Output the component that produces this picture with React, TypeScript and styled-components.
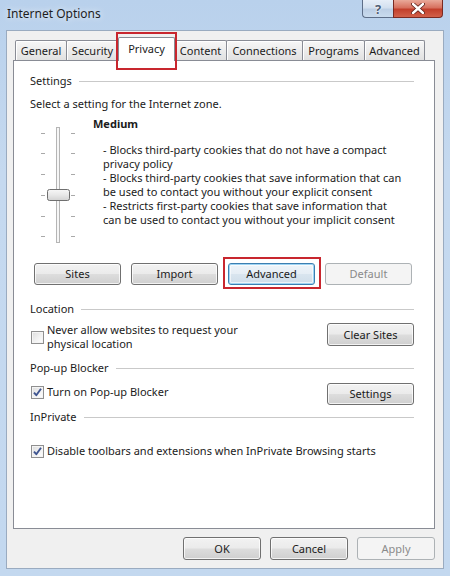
import React from 'react';
import styled, { createGlobalStyle, css } from 'styled-components';

const GlobalStyle = createGlobalStyle`
  html, body {
    margin: 0;
    padding: 0;
  }
  body {
    width: 450px;
    height: 576px;
    overflow: hidden;
    font-family: "Noto Sans", "Liberation Sans", Arial, sans-serif;
    font-size: 11px;
    color: #1b1b1b;
  }
`;

const Window = styled.div`
  width: 450px;
  height: 576px;
  box-sizing: border-box;
  display: flex;
  flex-direction: column;
  padding: 0 6px 7px 6px;
  background: linear-gradient(180deg, #b9d1ec 0%, #c5d9ef 30%, #c3d8ef 100%);
`;

const TitleBar = styled.div`
  height: 30px;
  display: flex;
  justify-content: space-between;
  align-items: flex-start;
`;

const Title = styled.div`
  margin: 6px 0 0 1px;
  font-size: 12px;
  line-height: 16px;
  color: #1e1e1e;
  text-shadow: 0 0 6px rgba(255, 255, 255, 0.9);
`;

const CaptionGroup = styled.div`
  display: flex;
  margin-right: 1px;
`;

const CaptionButton = styled.div<{ $kind: 'help' | 'close' }>`
  height: 18px;
  box-sizing: border-box;
  display: flex;
  align-items: center;
  justify-content: center;
  border: 1px solid #5d6e88;
  border-top: none;
  ${(p) =>
    p.$kind === 'help'
      ? css`
          width: 31px;
          border-radius: 0 0 0 4px;
          border-right: none;
          background: linear-gradient(180deg, #e6eef8 0%, #d3e0ef 45%, #bccfe5 55%, #c9dbee 100%);
          color: #4d5d74;
          font-size: 13px;
          font-weight: bold;
          text-shadow: 0 0 2px #fff, 0 0 1px #fff;
        `
      : css`
          width: 50px;
          border-radius: 0 0 4px 0;
          border-color: #7a2a22;
          background: linear-gradient(180deg, #e9a999 0%, #d7715f 45%, #c23f2b 55%, #d2614a 100%);
        `}
`;

const Client = styled.div`
  flex: 1;
  display: flex;
  flex-direction: column;
  border: 1px solid #9aabc0;
  background: #f0f0f0;
  padding: 6px 8px 8px 6px;
`;

const TabStrip = styled.div`
  position: relative;
  z-index: 2;
  height: 23px;
  display: flex;
  align-items: flex-end;
  padding-left: 3px;
`;

const Tab = styled.div<{ $w: number; $active?: boolean; $marked?: boolean }>`
  position: relative;
  width: ${(p) => p.$w}px;
  box-sizing: border-box;
  margin-left: -1px;
  text-align: center;
  border: 1px solid #898c95;
  border-bottom: none;
  border-radius: 2px 2px 0 0;
  ${(p) =>
    p.$active
      ? css`
          z-index: 1;
          height: 24px;
          line-height: 22px;
          margin-bottom: -1px;
          background: #fff;
        `
      : css`
          height: 20px;
          line-height: 19px;
          background: linear-gradient(180deg, #f7f7f7 0%, #ececec 50%, #e1e1e1 100%);
          box-shadow: inset 1px 1px 0 #fff;
        `}
  ${(p) =>
    p.$marked &&
    css`
      &::after {
        content: '';
        position: absolute;
        left: -3px;
        right: -3px;
        top: -6px;
        bottom: -9px;
        border: 2px solid #c8262e;
      }
    `}
`;

const Panel = styled.div`
  flex: 1;
  border: 1px solid #898c95;
  background: #fff;
  padding: 13px 20px 0 16px;
`;

const GroupHeader = styled.div<{ $gap: number }>`
  margin-top: ${(p) => p.$gap}px;
  display: flex;
  align-items: center;
  line-height: 14px;
  &::after {
    content: '';
    flex: 1;
    height: 1px;
    margin-left: 7px;
    background: #c9c9c9;
  }
`;

const Text = styled.div<{ $gap?: number }>`
  margin-top: ${(p) => p.$gap ?? 0}px;
  line-height: 14px;
`;

const ZoneRow = styled.div`
  margin-top: 6px;
  display: flex;
`;

const SliderBox = styled.svg`
  width: 63px;
  height: 128px;
  flex: none;
`;

const LevelBlock = styled.div`
  line-height: 14px;
`;

const LevelName = styled.div`
  font-weight: bold;
`;

const LevelDesc = styled.div`
  margin-top: 12px;
  padding-left: 10px;
`;

const ButtonRow = styled.div`
  margin-top: 18px;
  padding-left: 4px;
  display: flex;
  gap: 10px;
`;

const Button = styled.div<{ $w: number; $h?: number; $disabled?: boolean; $focused?: boolean; $marked?: boolean }>`
  position: relative;
  width: ${(p) => p.$w}px;
  height: ${(p) => p.$h ?? 22}px;
  line-height: ${(p) => (p.$h ?? 22) - 2}px;
  box-sizing: border-box;
  flex: none;
  text-align: center;
  border-radius: 3px;
  border: 1px solid #707070;
  background: linear-gradient(180deg, #f2f2f2 0%, #ebebeb 48%, #dddddd 52%, #cfcfcf 100%);
  box-shadow: inset 0 0 0 1px rgba(255, 255, 255, 0.75);
  color: #1b1b1b;
  ${(p) =>
    p.$focused &&
    css`
      border-color: #3c7fb1;
      background: linear-gradient(180deg, #eef4f9 0%, #e6eef5 48%, #d9e5ef 52%, #cfdde9 100%);
      box-shadow: inset 0 0 0 1px #9fd4f3, inset 0 0 0 2px rgba(255, 255, 255, 0.6);
    `}
  ${(p) =>
    p.$disabled &&
    css`
      border-color: #adb2b5;
      background: #f4f4f4;
      box-shadow: none;
      color: #8a8a8a;
    `}
  ${(p) =>
    p.$marked &&
    css`
      &::after {
        content: '';
        position: absolute;
        left: -6px;
        right: -7px;
        top: -7px;
        bottom: -5px;
        border: 2px solid #c8262e;
      }
    `}
`;

const OptionRow = styled.div<{ $gap: number }>`
  margin-top: ${(p) => p.$gap}px;
  display: flex;
  justify-content: space-between;
  align-items: flex-start;
`;

const CheckLabel = styled.label<{ $pad?: number }>`
  display: flex;
  align-items: center;
  gap: 3px;
  padding-top: ${(p) => p.$pad ?? 0}px;
  line-height: 14px;
`;

const Box = styled.span`
  width: 13px;
  height: 13px;
  margin-left: 1px;
  flex: none;
  box-sizing: border-box;
  border: 1px solid #8f8f8f;
  background: linear-gradient(135deg, #dcdcdc 0%, #f3f3f3 60%, #fff 100%);
  box-shadow: inset 0 0 0 1px #f4f4f4;
  display: flex;
  align-items: center;
  justify-content: center;
`;

const Footer = styled.div`
  margin-top: 8px;
  display: flex;
  justify-content: flex-end;
  gap: 9px;
`;

const Check = ({ checked }: { checked?: boolean }) => (
  <Box>
    {checked && (
      <svg width="11" height="11" viewBox="0 0 11 11">
        <path d="M2 5.6 L4.3 8.2 L9 1.8" fill="none" stroke="#3f5590" strokeWidth="1.9" strokeLinejoin="round" />
      </svg>
    )}
  </Box>
);

const ticks = [16, 36, 57, 78, 99, 119];

const PrivacySlider = () => (
  <SliderBox viewBox="0 0 63 128">
    {ticks.map((y) => (
      <g key={y} fill="#a9a9a9">
        <rect x="11" y={y} width="4" height="1" />
        <rect x="41" y={y} width="4" height="1" />
      </g>
    ))}
    <rect x="26.5" y="10.5" width="3" height="115" fill="#f6f6f6" stroke="#b5b5b5" />
    <rect x="17.5" y="72.5" width="22" height="11" rx="2" fill="url(#thumb)" stroke="#6f6f6f" />
    <defs>
      <linearGradient id="thumb" x1="0" y1="0" x2="0" y2="1">
        <stop offset="0" stopColor="#f7f7f7" />
        <stop offset="0.5" stopColor="#e8e8e8" />
        <stop offset="1" stopColor="#d2d2d2" />
      </linearGradient>
    </defs>
  </SliderBox>
);

const tabs = [
  { label: 'General', w: 52 },
  { label: 'Security', w: 53 },
  { label: 'Privacy', w: 57, active: true },
  { label: 'Content', w: 53 },
  { label: 'Connections', w: 77 },
  { label: 'Programs', w: 63 },
  { label: 'Advanced', w: 61 },
];

export default function App() {
  return (
    <>
      <GlobalStyle />
      <Window>
        <TitleBar>
          <Title>Internet Options</Title>
          <CaptionGroup>
            <CaptionButton $kind="help">?</CaptionButton>
            <CaptionButton $kind="close">
              <svg width="14" height="11" viewBox="0 0 14 11">
                <path d="M2 1 L12 10 M12 1 L2 10" stroke="#5a1d16" strokeWidth="4" strokeLinecap="round" />
                <path d="M2 1 L12 10 M12 1 L2 10" stroke="#fff" strokeWidth="2.4" strokeLinecap="round" />
              </svg>
            </CaptionButton>
          </CaptionGroup>
        </TitleBar>

        <Client>
          <TabStrip>
            {tabs.map((t) => (
              <Tab key={t.label} $w={t.w} $active={t.active} $marked={t.active}>
                {t.label}
              </Tab>
            ))}
          </TabStrip>

          <Panel>
            <GroupHeader $gap={0}>Settings</GroupHeader>
            <Text $gap={9}>Select a setting for the Internet zone.</Text>

            <ZoneRow>
              <PrivacySlider />
              <LevelBlock>
                <LevelName>Medium</LevelName>
                <LevelDesc>
                  - Blocks third-party cookies that do not have a compact
                  <br />
                  privacy policy
                  <br />
                  - Blocks third-party cookies that save information that can
                  <br />
                  be used to contact you without your explicit consent
                  <br />
                  - Restricts first-party cookies that save information that
                  <br />
                  can be used to contact you without your implicit consent
                </LevelDesc>
              </LevelBlock>
            </ZoneRow>

            <ButtonRow>
              <Button $w={87}>Sites</Button>
              <Button $w={87}>Import</Button>
              <Button $w={87} $focused $marked>
                Advanced
              </Button>
              <Button $w={87} $disabled>
                Default
              </Button>
            </ButtonRow>

            <GroupHeader $gap={17}>Location</GroupHeader>
            <OptionRow $gap={7}>
              <CheckLabel>
                <Check />
                <span>
                  Never allow websites to request your
                  <br />
                  physical location
                </span>
              </CheckLabel>
              <Button $w={87} $h={23}>
                Clear Sites
              </Button>
            </OptionRow>

            <GroupHeader $gap={10}>Pop-up Blocker</GroupHeader>
            <OptionRow $gap={8}>
              <CheckLabel $pad={2}>
                <Check checked />
                <span>Turn on Pop-up Blocker</span>
              </CheckLabel>
              <Button $w={87}>Settings</Button>
            </OptionRow>

            <GroupHeader $gap={5}>InPrivate</GroupHeader>
            <OptionRow $gap={20}>
              <CheckLabel>
                <Check checked />
                <span>Disable toolbars and extensions when InPrivate Browsing starts</span>
              </CheckLabel>
            </OptionRow>
          </Panel>

          <Footer>
            <Button $w={78} $h={23}>
              OK
            </Button>
            <Button $w={78} $h={23}>
              Cancel
            </Button>
            <Button $w={78} $h={23} $disabled>
              Apply
            </Button>
          </Footer>
        </Client>
      </Window>
    </>
  );
}
